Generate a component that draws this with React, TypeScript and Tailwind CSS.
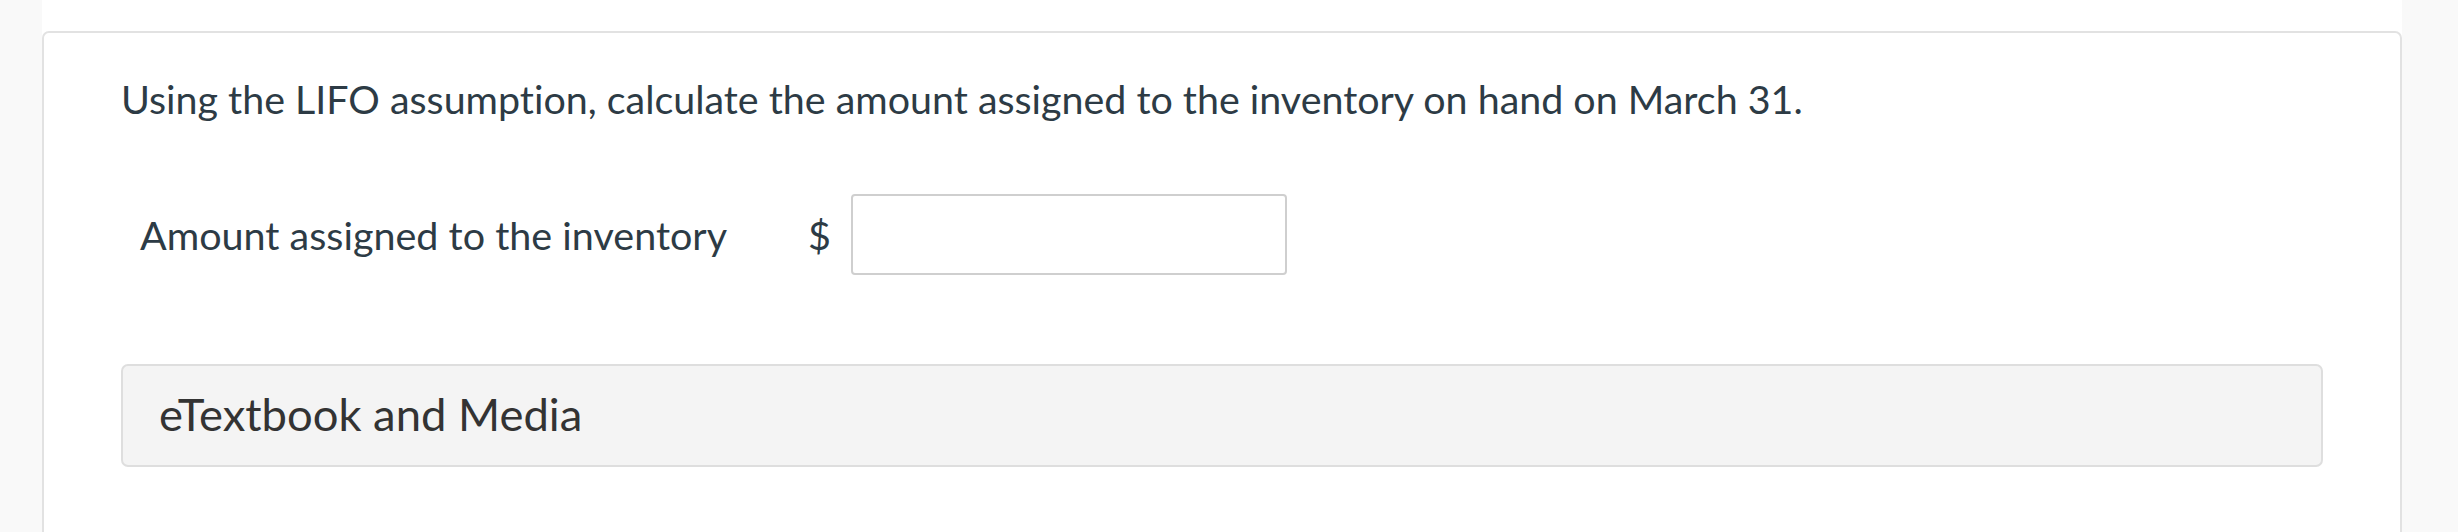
import React from "react";

export default function App() {
  return (
    <div
      className="flex h-[532px] w-[2458px] overflow-hidden bg-[#f9f9f9] [font-variant-ligatures:none]"
      style={{ fontFamily: "Lato, 'Open Sans', sans-serif" }}
    >
      <div className="w-[42px] shrink-0" />
      <div className="w-[2360px] shrink-0 bg-white pt-[31px]">
        <div className="h-[600px] rounded-[7px] border-2 border-[#e2e2e2] bg-white px-[77px] pt-[42px]">
          <p className="text-[39.4px] leading-[47px] text-[#2d3b45]">
            Using the LIFO assumption, calculate the amount assigned to the inventory on hand on March 31.
          </p>
          <div className="mt-[72px] flex h-[81px] items-center">
            <span className="ml-[19px] w-[668px] text-[39.5px] leading-[47px] text-[#2d3b45]">
              Amount assigned to the inventory
            </span>
            <span className="w-[43px] text-[39.5px] leading-[47px] text-[#2d3b45]">$</span>
            <input
              type="text"
              className="h-[81px] w-[436px] rounded-[4px] border-2 border-[#cfcfcf] bg-white outline-none"
            />
          </div>
          <div className="mt-[89px] rounded-[7px] border-2 border-[#dedede] bg-[#f4f4f4] pl-[36px] pt-[21px] pb-[24px]">
            <span className="text-[45.4px] leading-[54px] text-[#333333]">eTextbook and Media</span>
          </div>
        </div>
      </div>
      <div className="flex-1" />
    </div>
  );
}
